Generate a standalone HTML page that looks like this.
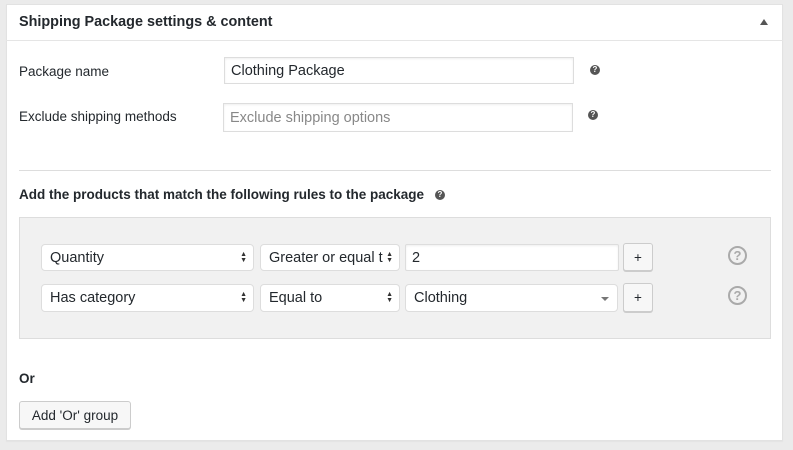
<!DOCTYPE html>
<html><head><style>
*{box-sizing:border-box}
body{margin:0;width:793px;height:450px;background:#ebebeb;font-family:"Liberation Sans",sans-serif;font-size:13.5px;color:#23282d;position:relative;overflow:hidden}
.a{position:absolute}
.panel{left:6px;top:4px;width:777px;height:437px;background:#fff;border:1px solid #e2e2e2;box-shadow:0 1px 1px rgba(0,0,0,.04)}
.hdr{left:6px;top:40px;width:777px;height:1px;background:#e5e5e5}
.inp{border:1px solid #ddd;box-shadow:inset 0 1px 2px rgba(0,0,0,.07);background:#fff;font-size:14.5px;padding:0 6px;display:flex;align-items:center}
.sel{border:1px solid #ddd;border-radius:4px;background:#fff;font-size:14.5px;padding:0 8px;display:flex;align-items:center}
.btn{border:1px solid #ccc;border-radius:3px;background:#f7f7f7;box-shadow:0 1px 0 #ccc;display:flex;align-items:center;justify-content:center;font-size:13.5px}
.hq{width:10px;height:10px;border-radius:50%;background:#555;color:#fff;font-size:8px;font-weight:bold;text-align:center;line-height:10px}
.hc{width:19px;height:19px;border-radius:50%;border:2px solid #aaa;color:#aaa;font-size:13px;font-weight:bold;text-align:center;line-height:15px}
.ud{right:6px;top:50%;transform:translateY(-50%);font-size:7px;line-height:6px;color:#333}
</style></head><body>
<div class="a panel"></div>
<div class="a hdr"></div>
<div class="a" style="left:19px;top:14px;font-size:14.4px;font-weight:bold">Shipping Package settings &amp; content</div>
<div class="a" style="left:760px;top:19px;width:0;height:0;border-left:4px solid transparent;border-right:4px solid transparent;border-bottom:6px solid #555"></div>

<div class="a" style="left:19px;top:64px">Package name</div>
<div class="a inp" style="left:224px;top:57px;width:350px;height:27px">Clothing Package</div>
<div class="a hq" style="left:590px;top:65px">?</div>

<div class="a" style="left:19px;top:109px">Exclude shipping methods</div>
<div class="a inp" style="left:223px;top:103px;width:350px;height:29px;color:#888">Exclude shipping options</div>
<div class="a hq" style="left:588px;top:110px">?</div>

<div class="a" style="left:19px;top:170px;width:752px;height:1px;background:#ddd"></div>
<div class="a" style="left:19px;top:187px;font-weight:bold">Add the products that match the following rules to the package</div>
<div class="a hq" style="left:435px;top:190px">?</div>

<div class="a" style="left:19px;top:217px;width:752px;height:122px;background:#f1f1f1;border:1px solid #ddd"></div>

<div class="a sel" style="left:41px;top:244px;width:213px;height:27px">Quantity<div class="a ud">▲<br>▼</div></div>
<div class="a sel" style="left:260px;top:244px;width:140px;height:27px;white-space:nowrap;overflow:hidden">Greater or equal t<div class="a ud" style="background:#fff;padding-left:2px">▲<br>▼</div></div>
<div class="a inp" style="left:405px;top:244px;width:214px;height:27px;border-radius:2px">2</div>
<div class="a btn" style="left:623px;top:243px;width:30px;height:28px">+</div>
<div class="a hc" style="left:728px;top:246px">?</div>

<div class="a sel" style="left:41px;top:284px;width:213px;height:28px">Has category<div class="a ud">▲<br>▼</div></div>
<div class="a sel" style="left:260px;top:284px;width:140px;height:28px">Equal to<div class="a ud">▲<br>▼</div></div>
<div class="a sel" style="left:405px;top:284px;width:213px;height:28px">Clothing<div class="a" style="right:8px;top:12px;width:0;height:0;border-left:4px solid transparent;border-right:4px solid transparent;border-top:4px solid #777"></div></div>
<div class="a btn" style="left:623px;top:283px;width:30px;height:29px">+</div>
<div class="a hc" style="left:728px;top:286px">?</div>

<div class="a" style="left:19px;top:371px;font-weight:bold">Or</div>
<div class="a btn" style="left:19px;top:401px;width:112px;height:28px">Add 'Or' group</div>
</body></html>
